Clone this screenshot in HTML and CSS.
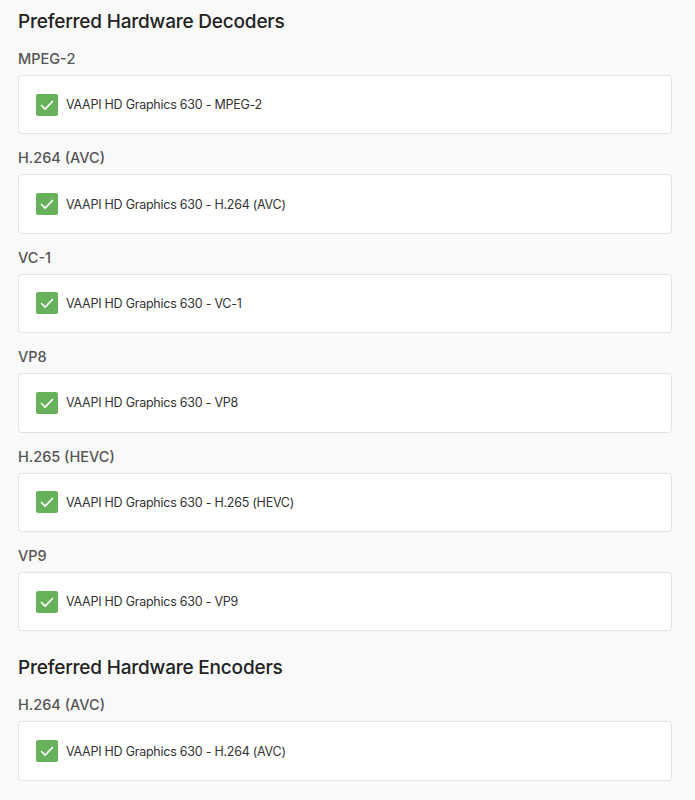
FILE: index.html
```html
<!DOCTYPE html>
<html lang="en">

<head>
  <meta charset="UTF-8" />
  <meta name="viewport" content="width=device-width, initial-scale=1.0" />
  <title>Hardware Acceleration</title>
  <link rel="stylesheet" href="styles.css">
</head>

<body>
  <div class="section">
    <h2 class="section-title">Preferred Hardware Decoders</h2>

    <div class="codec">
      <div class="codec-label">MPEG-2</div>
      <div class="codec-box">
        <label class="option"><span class="check"><svg viewBox="0 0 22 22"><path d="M5.5 11.5l3.6 3.6 7.4-7.6" /></svg></span>VAAPI HD Graphics 630 - MPEG-2</label>
      </div>
    </div>

    <div class="codec">
      <div class="codec-label">H.264 (AVC)</div>
      <div class="codec-box">
        <label class="option"><span class="check"><svg viewBox="0 0 22 22"><path d="M5.5 11.5l3.6 3.6 7.4-7.6" /></svg></span>VAAPI HD Graphics 630 - H.264 (AVC)</label>
      </div>
    </div>

    <div class="codec">
      <div class="codec-label">VC-1</div>
      <div class="codec-box">
        <label class="option"><span class="check"><svg viewBox="0 0 22 22"><path d="M5.5 11.5l3.6 3.6 7.4-7.6" /></svg></span>VAAPI HD Graphics 630 - VC-1</label>
      </div>
    </div>

    <div class="codec">
      <div class="codec-label">VP8</div>
      <div class="codec-box">
        <label class="option"><span class="check"><svg viewBox="0 0 22 22"><path d="M5.5 11.5l3.6 3.6 7.4-7.6" /></svg></span>VAAPI HD Graphics 630 - VP8</label>
      </div>
    </div>

    <div class="codec">
      <div class="codec-label">H.265 (HEVC)</div>
      <div class="codec-box">
        <label class="option"><span class="check"><svg viewBox="0 0 22 22"><path d="M5.5 11.5l3.6 3.6 7.4-7.6" /></svg></span>VAAPI HD Graphics 630 - H.265 (HEVC)</label>
      </div>
    </div>

    <div class="codec">
      <div class="codec-label">VP9</div>
      <div class="codec-box">
        <label class="option"><span class="check"><svg viewBox="0 0 22 22"><path d="M5.5 11.5l3.6 3.6 7.4-7.6" /></svg></span>VAAPI HD Graphics 630 - VP9</label>
      </div>
    </div>
  </div>

  <div class="section">
    <h2 class="section-title">Preferred Hardware Encoders</h2>

    <div class="codec">
      <div class="codec-label">H.264 (AVC)</div>
      <div class="codec-box">
        <label class="option"><span class="check"><svg viewBox="0 0 22 22"><path d="M5.5 11.5l3.6 3.6 7.4-7.6" /></svg></span>VAAPI HD Graphics 630 - H.264 (AVC)</label>
      </div>
    </div>
  </div>
</body>

</html>
```

FILE: styles.css
```css
body {
  margin: 0;
  padding: 9px 23px 0 18px;
  background-color: #f9f9f9;
  font-family: Inter, 'Noto Sans', sans-serif;
  color: #333;
}

.section + .section {
  margin-top: 24px;
}

.section-title {
  margin: 0 0 14px;
  font-size: 19px;
  line-height: 26px;
  font-weight: 500;
  letter-spacing: -0.2px;
  color: #222;
}

.codec {
  margin-bottom: 14px;
}

.codec-label {
  font-size: 14.5px;
  line-height: 20px;
  font-weight: 500;
  color: #555;
  margin-bottom: 6px;
}

.codec-box {
  height: 59.4px;
  box-sizing: border-box;
  background: #fff;
  border: 1px solid #e3e3e3;
  border-radius: 4px;
  padding: 0 17px;
  display: flex;
  align-items: center;
}

.option {
  display: flex;
  align-items: center;
  gap: 8px;
  font-size: 12.5px;
  letter-spacing: -0.25px;
  color: #333;
  cursor: pointer;
}

.check {
  width: 22px;
  height: 22px;
  border-radius: 2px;
  background-color: #67b15b;
  display: flex;
}

.check svg {
  width: 22px;
  height: 22px;
  fill: none;
  stroke: #fff;
  stroke-width: 1.7;
  stroke-linecap: round;
  stroke-linejoin: round;
}
```
